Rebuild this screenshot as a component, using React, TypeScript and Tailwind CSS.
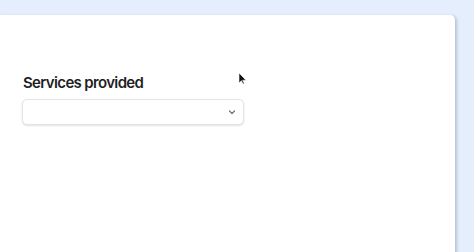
export default function App() {
  return (
    <div
      className="h-[252px] w-[474px] overflow-hidden bg-[#e4eefc] pt-[15px]"
      style={{ fontFamily: "Inter, 'Noto Sans', sans-serif" }}
    >
      {/* Carte blanche, coupée à gauche et en bas */}
      <div className="relative h-[260px] w-[455px] rounded-tr-[5px] bg-white shadow-[2px_1px_3px_rgba(100,116,139,0.35)]">
        <div className="px-[22px] pt-[59px]">
          <label className="block pl-px text-[15px] font-semibold leading-[18px] tracking-[-0.65px] text-[#1f1f1f]">
            Services provided
          </label>
          <button
            type="button"
            className="mt-[7px] flex h-[26px] w-[222px] items-center justify-end rounded-[5px] border border-[#e2e4e8] bg-white pr-[6px] shadow-[0_1px_2px_rgba(0,0,0,0.12)]"
          >
            <svg width="10" height="10" viewBox="0 0 10 10" fill="none">
              <path
                d="M2.5 4l2.5 2.5L7.5 4"
                stroke="#6b7280"
                strokeWidth="1.2"
                strokeLinecap="round"
                strokeLinejoin="round"
              />
            </svg>
          </button>
        </div>

        {/* Pointeur de souris */}
        <svg
          className="absolute left-[238px] top-[57px]"
          width="9"
          height="13"
          viewBox="0 0 9 13"
        >
          <path
            d="M1 1v10l2.4-2.3 1.6 3.4 1.3-.6-1.6-3.3H8z"
            fill="#111"
            stroke="#fff"
            strokeWidth="0.6"
          />
        </svg>
      </div>
    </div>
  );
}
